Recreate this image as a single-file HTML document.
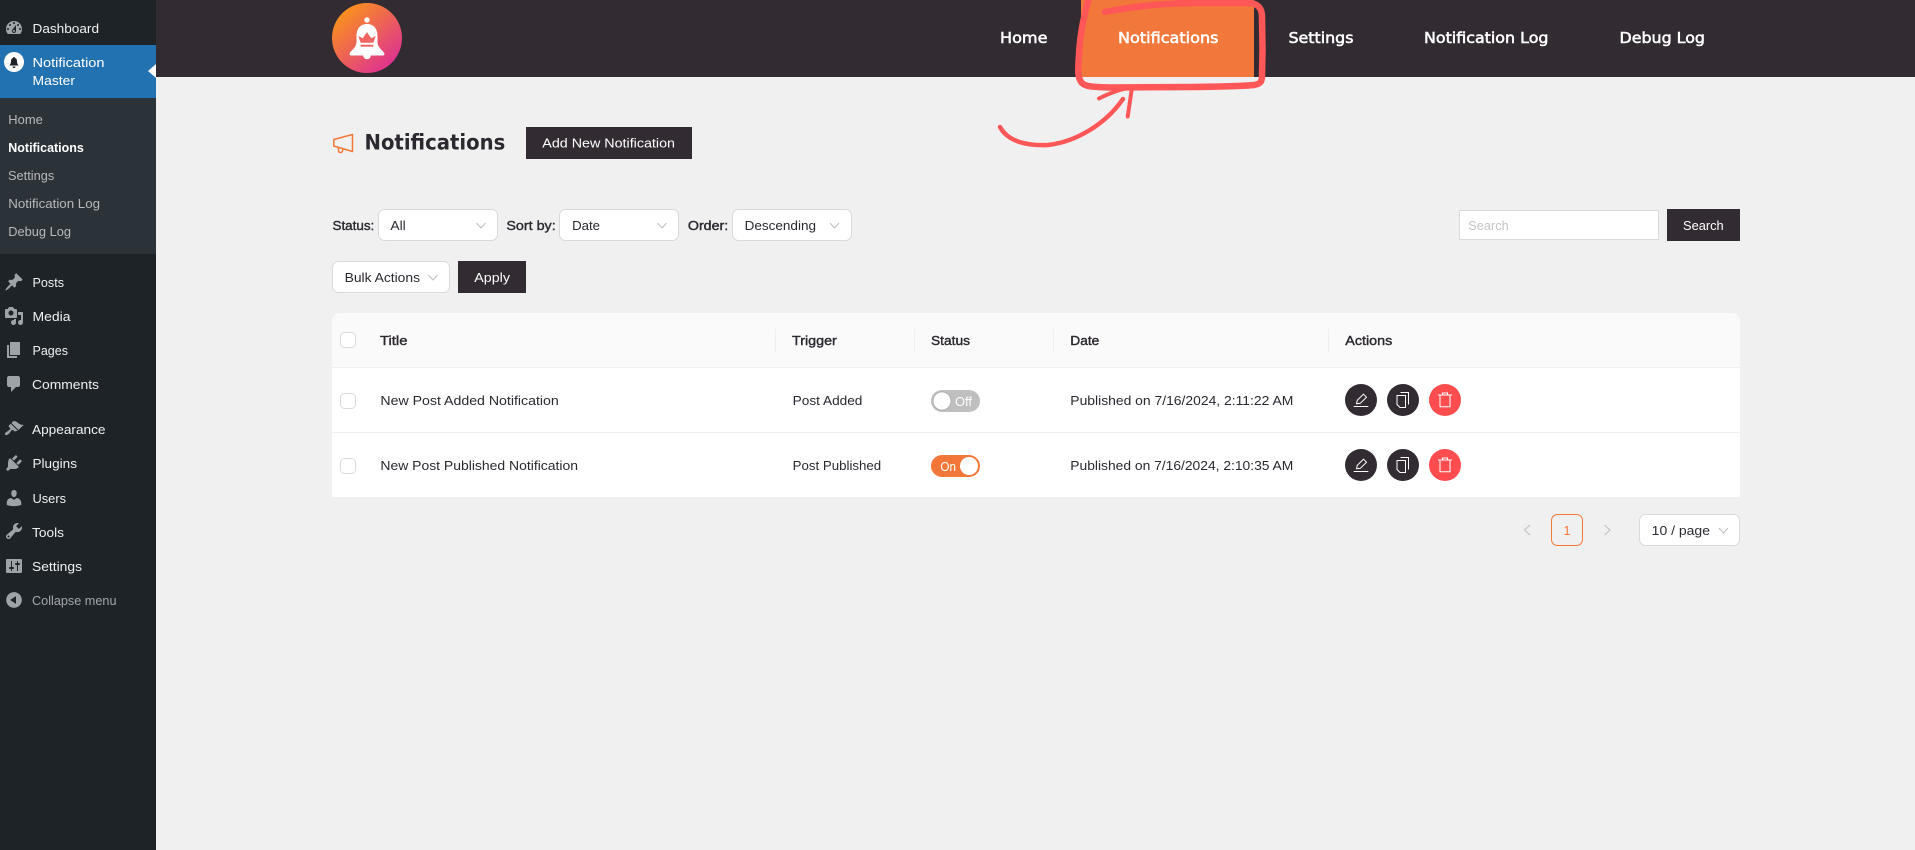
<!DOCTYPE html>
<html lang="en"><head><meta charset="utf-8"><title>Notifications</title>
<style>
html,body{margin:0;padding:0;width:1915px;height:850px;overflow:hidden;background:#f0f0f0}
svg{display:block}
text{font-family:"Liberation Sans",Arial,sans-serif;font-size:13.2px;fill:#2c2830}
.m{fill:#f0f0f1}.s{fill:#b7b9bc}.w{fill:#fff}
.h{stroke:#2c2830;stroke-width:.4px}
.n{font-family:"DejaVu Sans",sans-serif;font-size:15px;fill:#fff;stroke:#fff;stroke-width:.55px}
.i{fill:#9ea3a7}
.sel{fill:#fff;stroke:#d9d9d9}
.ch{fill:none;stroke:#bdbdbd;stroke-width:1}
.ic{fill:none;stroke:#fff;stroke-width:1}
</style></head><body>
<svg width="1915" height="850" viewBox="0 0 1915 850" xmlns="http://www.w3.org/2000/svg">
<defs><linearGradient id="g" x1="0.12" y1="0.12" x2="0.82" y2="0.9"><stop offset="0" stop-color="#fb921c"/><stop offset="1" stop-color="#df338f"/></linearGradient></defs>
<rect width="1915" height="850" fill="#f0f0f0"/>
<!-- sidebar -->
<rect width="156" height="850" fill="#1d2327"/>
<rect y="45" width="156" height="53" fill="#2271b1"/>
<rect y="98" width="156" height="156" fill="#2c3338"/>
<path d="M156 64 L148 71 L156 78Z" fill="#fff"/>
<g class="i">
<path transform="translate(4,18)" fill-rule="evenodd" d="M3.76 16h12.48c1.1-1.37 1.76-3.11 1.76-5 0-4.42-3.58-8-8-8s-8 3.58-8 8c0 1.89.66 3.63 1.76 5zM10 4c.55 0 1 .45 1 1s-.45 1-1 1-1-.45-1-1 .45-1 1-1zM6 6c.55 0 1 .45 1 1s-.45 1-1 1-1-.45-1-1 .45-1 1-1zm8 0c.55 0 1 .45 1 1s-.45 1-1 1-1-.45-1-1 .45-1 1-1zm-5.37 5.55L12 7v6c0 1.1-.9 2-2 2s-2-.9-2-2c0-.57.24-1.08.63-1.45zM4 10c.55 0 1 .45 1 1s-.45 1-1 1-1-.45-1-1 .45-1 1-1zm12 0c.55 0 1 .45 1 1s-.45 1-1 1-1-.45-1-1 .45-1 1-1zm-5 3c0-.55-.45-1-1-1s-1 .45-1 1 .45 1 1 1 1-.45 1-1z"/>
<path transform="translate(4,272)" d="M10.44 3.02l1.82-1.82 6.36 6.35-1.83 1.82c-1.05-.68-2.48-.57-3.41.36l-.75.75c-.92.93-1.04 2.35-.35 3.41l-1.83 1.82-2.41-2.41-2.8 2.79c-.42.42-3.38 2.71-3.8 2.29s1.86-3.39 2.28-3.81l2.79-2.79L4.1 9.36l1.83-1.82c1.05.69 2.48.57 3.4-.36l.75-.75c.93-.92 1.05-2.35.36-3.41z"/>
<path transform="translate(4,306)" fill-rule="evenodd" d="M13 11V4c0-.55-.45-1-1-1h-1.67L9 1H5L3.67 3H2c-.55 0-1 .45-1 1v7c0 .55.45 1 1 1h10c.55 0 1-.45 1-1zM7 4.5c1.38 0 2.5 1.12 2.5 2.5S8.38 9.5 7 9.5 4.5 8.38 4.5 7 5.62 4.5 7 4.5zM14 6h5v10.5c0 1.38-1.12 2.5-2.5 2.5S14 17.88 14 16.5s1.12-2.5 2.5-2.5c.17 0 .34.02.5.05V9h-3V6zm-4 8.05V13h2v3.5c0 1.38-1.12 2.5-2.5 2.5S7 17.88 7 16.5 8.12 14 9.5 14c.17 0 .34.02.5.05z"/>
<path transform="translate(4,340)" d="M6 15V2h10v13H6zm-1 1h8v2H3V5h2v11z"/>
<path transform="translate(4,374)" d="M5 2h9c1.1 0 2 .9 2 2v7c0 1.1-.9 2-2 2h-2l-5 5v-5H5c-1.1 0-2-.9-2-2V4c0-1.1.9-2 2-2z"/>
<path transform="translate(4,419)" d="M14.48 11.06L7.41 3.99l1.5-1.5c.5-.56 2.3-.47 3.51.32 1.21.8 1.43 1.28 2.91 2.1 1.18.64 2.45 1.26 4.45.85zm-.71.71L6.7 4.7 4.93 6.47c-.39.39-.39 1.02 0 1.41l1.06 1.06c.39.39.39 1.03 0 1.42-.6.6-1.43 1.11-2.21 1.69-.35.26-.7.53-1.01.84C1.43 13.23.4 14.96 1.28 15.84c.87.87 2.6-.15 3.94-1.49.31-.31.58-.66.85-1.02.57-.78 1.08-1.61 1.69-2.21.39-.39 1.02-.39 1.41 0l1.06 1.06c.39.39 1.02.39 1.41 0z"/>
<path transform="translate(4,453)" d="M13.11 4.36L9.87 7.6 8 5.73l3.24-3.24c.35-.34 1.05-.2 1.56.32.52.51.66 1.21.31 1.55zm-8 1.77l.91-1.12 9.01 9.01-1.19.84c-.71.71-2.63 1.16-3.82 1.16H6.14L4.9 17.26c-.59.59-1.54.59-2.12 0-.59-.58-.59-1.53 0-2.12l1.24-1.24v-3.88c0-1.13.4-3.19 1.09-3.89zm7.26 3.97l3.24-3.24c.34-.35 1.04-.21 1.55.31.52.51.66 1.21.31 1.55l-3.24 3.25z"/>
<path transform="translate(4,488)" d="M10 9.25c-2.27 0-2.73-3.44-2.73-3.44C7 4.02 7.82 2 9.97 2c2.16 0 2.98 2.02 2.71 3.81 0 0-.41 3.44-2.68 3.44zm0 2.57L12.72 10c2.39 0 4.52 2.33 4.52 4.53v2.49s-3.65 1.13-7.24 1.13c-3.65 0-7.24-1.13-7.24-1.13v-2.49c0-2.25 1.94-4.48 4.47-4.48z"/>
<path transform="translate(4,521)" fill-rule="evenodd" d="M16.68 9.77c-1.34 1.34-3.3 1.67-4.95.99l-5.41 6.52c-.99.99-2.59.99-3.58 0s-.99-2.59 0-3.57l6.52-5.42c-.68-1.65-.35-3.61.99-4.95 1.28-1.28 3.12-1.62 4.72-1.06l-2.89 2.89 2.82 2.82 2.86-2.87c.53 1.58.18 3.39-1.08 4.65zM3.81 16.21c.4.39 1.04.39 1.43 0 .4-.4.4-1.04 0-1.43-.39-.4-1.03-.4-1.43 0-.39.39-.39 1.03 0 1.43z"/>
<path transform="translate(4,556)" fill-rule="evenodd" d="M18 16V4c0-.55-.45-1-1-1H3c-.55 0-1 .45-1 1v12c0 .55.45 1 1 1h14c.55 0 1-.45 1-1zM8 11h1c.55 0 1 .45 1 1s-.45 1-1 1H8v1.5c0 .28-.22.5-.5.5s-.5-.22-.5-.5V13H6c-.55 0-1-.45-1-1s.45-1 1-1h1V5.5c0-.28.22-.5.5-.5s.5.22.5.5V11zm5-2h-1c-.55 0-1-.45-1-1s.45-1 1-1h1V5.5c0-.28.22-.5.5-.5s.5.22.5.5V7h1c.55 0 1 .45 1 1s-.45 1-1 1h-1v5.5c0 .28-.22.5-.5.5s-.5-.22-.5-.5V9z"/>
<path transform="translate(4,590)" fill-rule="evenodd" d="M10 2.16c4.33 0 7.84 3.51 7.84 7.84s-3.51 7.84-7.84 7.84S2.16 14.33 2.16 10 5.71 2.16 10 2.16zm2 11.72V6.12L6.18 9.97z"/>
</g>
<circle cx="14" cy="62" r="10" fill="#fff"/>
<path d="M14 57a1 1 0 0 1 1 1c1.8.6 2 2 2 3.500 0 2 .6 2.800 1.600 4H9.400c1-1.200 1.600-2 1.600-4 0-1.500.2-2.900 2-3.500a1 1 0 0 1 1-1zM12.500 66.500h3a1.500 1.500 0 0 1-3 0z" fill="#1d2327"/>
<text class="m" x="32.500" y="33" textLength="66.500" lengthAdjust="spacingAndGlyphs">Dashboard</text>
<text class="w" x="32.500" y="67" textLength="72" lengthAdjust="spacingAndGlyphs">Notification</text>
<text class="w" x="32.500" y="85" textLength="42.500" lengthAdjust="spacingAndGlyphs">Master</text>
<text class="s" x="8.300" y="124" textLength="34.500" lengthAdjust="spacingAndGlyphs">Home</text>
<text class="w" x="8.300" y="152" textLength="75.500" lengthAdjust="spacingAndGlyphs" font-weight="700">Notifications</text>
<text class="s" x="8" y="180" textLength="46.300" lengthAdjust="spacingAndGlyphs">Settings</text>
<text class="s" x="8.300" y="208" textLength="91.700" lengthAdjust="spacingAndGlyphs">Notification Log</text>
<text class="s" x="8.300" y="236" textLength="62.700" lengthAdjust="spacingAndGlyphs">Debug Log</text>
<text class="m" x="32.500" y="287" textLength="31.500" lengthAdjust="spacingAndGlyphs">Posts</text>
<text class="m" x="32.500" y="321" textLength="38" lengthAdjust="spacingAndGlyphs">Media</text>
<text class="m" x="32.500" y="355" textLength="35.500" lengthAdjust="spacingAndGlyphs">Pages</text>
<text class="m" x="32" y="389" textLength="67" lengthAdjust="spacingAndGlyphs">Comments</text>
<text class="m" x="32" y="434" textLength="73.500" lengthAdjust="spacingAndGlyphs">Appearance</text>
<text class="m" x="32.500" y="468" textLength="44.500" lengthAdjust="spacingAndGlyphs">Plugins</text>
<text class="m" x="32.500" y="503" textLength="33.500" lengthAdjust="spacingAndGlyphs">Users</text>
<text class="m" x="32" y="537" textLength="32" lengthAdjust="spacingAndGlyphs">Tools</text>
<text class="m" x="32" y="571" textLength="50" lengthAdjust="spacingAndGlyphs">Settings</text>
<text x="32" y="605" textLength="84.500" lengthAdjust="spacingAndGlyphs" style="fill:#a3a7ab">Collapse menu</text>
<!-- header -->
<rect x="156" width="1759" height="77" fill="#322b32"/>
<rect x="1081" width="173" height="77" fill="#f2773a"/>
<circle cx="367" cy="38" r="35" fill="url(#g)"/>
<circle cx="367" cy="20" r="2.700" fill="#fff"/>
<path d="M367 24C360 24 356.500 29 356.500 36L356.500 42C356.500 47 352 50 350 52.500Q348.700 55.500 351.500 55.500L382.500 55.500Q385.300 55.500 384 52.500C382 50 377.500 47 377.500 42L377.500 36C377.500 29 374 24 367 24Z" fill="#fff"/>
<circle cx="367" cy="55.500" r="3.800" fill="#fff"/>
<path d="M358.300 36L362.700 38.300 367 32.300 371.300 38.300 375.700 36 373.300 42.700H360.700Z" fill="#ee6460"/>
<rect x="360.700" y="44.700" width="12.600" height="2" fill="#ee6460"/>
<text class="n" x="1000" y="43" textLength="47.500" lengthAdjust="spacingAndGlyphs">Home</text>
<text class="n" x="1118" y="43" textLength="100.500" lengthAdjust="spacingAndGlyphs">Notifications</text>
<text class="n" x="1288.500" y="43" textLength="65" lengthAdjust="spacingAndGlyphs">Settings</text>
<text class="n" x="1424" y="43" textLength="124.500" lengthAdjust="spacingAndGlyphs">Notification Log</text>
<text class="n" x="1619.500" y="43" textLength="85.500" lengthAdjust="spacingAndGlyphs">Debug Log</text>
<!-- title row -->
<path d="M352.500 134.500V151.500L333.800 146V139.500ZM338.500 147.500V150.300A2 2 0 0 0 342.500 150.800L343 149" fill="none" stroke="#f27738" stroke-width="1.500" stroke-linejoin="round"/>
<text x="364.500" y="149.500" textLength="140.800" lengthAdjust="spacingAndGlyphs" style="font-family:'DejaVu Sans',sans-serif;font-size:21.500px;font-weight:700">Notifications</text>
<rect x="526" y="127" width="166" height="32" fill="#322b32"/>
<text class="w" x="542.300" y="147.500" textLength="132.700" lengthAdjust="spacingAndGlyphs">Add New Notification</text>
<!-- filters -->
<text class="h" x="332.500" y="230" textLength="41.800" lengthAdjust="spacingAndGlyphs">Status:</text>
<rect class="sel" x="378.500" y="209.500" width="119" height="31" rx="6"/>
<text x="390.400" y="230" textLength="15.300" lengthAdjust="spacingAndGlyphs">All</text>
<path class="ch" d="M476.500 223L481 228 485.500 223"/>
<text class="h" x="506.400" y="230" textLength="49.300" lengthAdjust="spacingAndGlyphs">Sort by:</text>
<rect class="sel" x="559.500" y="209.500" width="119" height="31" rx="6"/>
<text x="572.100" y="230" textLength="27.900" lengthAdjust="spacingAndGlyphs">Date</text>
<path class="ch" d="M657.500 223L662 228 666.500 223"/>
<text class="h" x="687.900" y="230" textLength="40.300" lengthAdjust="spacingAndGlyphs">Order:</text>
<rect class="sel" x="732.500" y="209.500" width="119" height="31" rx="6"/>
<text x="744.600" y="230" textLength="71.400" lengthAdjust="spacingAndGlyphs">Descending</text>
<path class="ch" d="M830 223L834.500 228 839 223"/>
<rect class="sel" x="332.500" y="261.500" width="117" height="31" rx="6"/>
<text x="344.600" y="282" textLength="75.400" lengthAdjust="spacingAndGlyphs">Bulk Actions</text>
<path class="ch" d="M428.500 275L433 280 437.500 275"/>
<rect x="458" y="261" width="68" height="32" fill="#322b32"/>
<text class="w" x="474.300" y="282" textLength="35.700" lengthAdjust="spacingAndGlyphs">Apply</text>
<rect x="1459.500" y="210.500" width="199" height="29" fill="#fff" stroke="#d9d9d9"/>
<text x="1468.300" y="230" textLength="40.400" lengthAdjust="spacingAndGlyphs" style="fill:#c4c4c4">Search</text>
<rect x="1667" y="209" width="73" height="32" fill="#322b32"/>
<text class="w" x="1683" y="230" textLength="40.700" lengthAdjust="spacingAndGlyphs">Search</text>
<!-- table -->
<path d="M332 367V321a8 8 0 0 1 8-8H1732a8 8 0 0 1 8 8V367Z" fill="#fafafa"/>
<rect x="332" y="367" width="1408" height="130" fill="#fff"/>
<rect x="332" y="367" width="1408" height="1" fill="#f0f0f0"/>
<rect x="332" y="432" width="1408" height="1" fill="#f0f0f0"/>
<g fill="#efefef"><rect x="775" y="329" width="1" height="23"/><rect x="914" y="329" width="1" height="23"/><rect x="1053" y="329" width="1" height="23"/><rect x="1328" y="329" width="1" height="23"/></g>
<g fill="#fff" stroke="#d9d9d9"><rect x="340.500" y="332.500" width="15" height="15" rx="4"/><rect x="340.500" y="393.500" width="15" height="15" rx="4"/><rect x="340.500" y="458.500" width="15" height="15" rx="4"/></g>
<text class="h" x="380" y="345" textLength="27.500" lengthAdjust="spacingAndGlyphs">Title</text>
<text class="h" x="792" y="345" textLength="44.800" lengthAdjust="spacingAndGlyphs">Trigger</text>
<text class="h" x="931" y="345" textLength="39" lengthAdjust="spacingAndGlyphs">Status</text>
<text class="h" x="1070.300" y="345" textLength="29" lengthAdjust="spacingAndGlyphs">Date</text>
<text class="h" x="1345.300" y="345" textLength="47" lengthAdjust="spacingAndGlyphs">Actions</text>
<text x="380.400" y="405" textLength="178.400" lengthAdjust="spacingAndGlyphs">New Post Added Notification</text>
<text x="792.700" y="405" textLength="69.700" lengthAdjust="spacingAndGlyphs">Post Added</text>
<text x="1070.300" y="405" textLength="223" lengthAdjust="spacingAndGlyphs">Published on 7/16/2024, 2:11:22 AM</text>
<text x="380.400" y="470" textLength="197.600" lengthAdjust="spacingAndGlyphs">New Post Published Notification</text>
<text x="792.700" y="470" textLength="88.500" lengthAdjust="spacingAndGlyphs">Post Published</text>
<text x="1070.300" y="470" textLength="223" lengthAdjust="spacingAndGlyphs">Published on 7/16/2024, 2:10:35 AM</text>
<!-- switches -->
<rect x="931" y="390" width="49" height="22" rx="11" fill="#bfbfbf"/>
<circle cx="942" cy="401" r="9" fill="#fff" stroke="#a9a9a9" stroke-width=".8"/>
<text class="w" x="955" y="406" textLength="17" lengthAdjust="spacingAndGlyphs" style="font-size:12.500px">Off</text>
<rect x="931" y="455" width="49" height="22" rx="11" fill="#f27738"/>
<circle cx="969" cy="466" r="9" fill="#fff"/>
<text class="w" x="940.400" y="471" textLength="15.600" lengthAdjust="spacingAndGlyphs" style="font-size:12.500px">On</text>
<!-- action buttons -->
<g transform="translate(0,400)">
<circle cx="1361" r="16" fill="#322b32"/><circle cx="1403" r="16" fill="#322b32"/><circle cx="1445" r="16" fill="#ff4d4f"/>
<path class="ic" d="M1353.700 6.500H1368.300M1356.500 3.800L1357.300 .3 1363.500-5.800 1366.500-2.800 1360.300 3.300Z"/>
<path class="ic" d="M1397-4.500H1405.500V7.500H1400L1397 4.500ZM1400.500-7.500H1408.500V4.500"/>
<path class="ic" d="M1438-5H1452M1442.500-5V-7H1447.500V-5M1440-5V6.700H1450V-5"/>
</g>
<g transform="translate(0,465)">
<circle cx="1361" r="16" fill="#322b32"/><circle cx="1403" r="16" fill="#322b32"/><circle cx="1445" r="16" fill="#ff4d4f"/>
<path class="ic" d="M1353.700 6.500H1368.300M1356.500 3.800L1357.300 .3 1363.500-5.800 1366.500-2.800 1360.300 3.300Z"/>
<path class="ic" d="M1397-4.500H1405.500V7.500H1400L1397 4.500ZM1400.500-7.500H1408.500V4.500"/>
<path class="ic" d="M1438-5H1452M1442.500-5V-7H1447.500V-5M1440-5V6.700H1450V-5"/>
</g>
<!-- pagination -->
<path d="M1530 525L1524.500 530 1530 535M1604.500 525L1610 530 1604.500 535" fill="none" stroke="#bdbdbd" stroke-width="1"/>
<rect x="1551.500" y="514.500" width="31" height="31" rx="6" fill="none" stroke="#f27738"/>
<text x="1563.500" y="535" textLength="7" lengthAdjust="spacingAndGlyphs" style="fill:#f27738">1</text>
<rect class="sel" x="1639.500" y="514.500" width="100" height="31" rx="6"/>
<text x="1651.700" y="535" textLength="58.300" lengthAdjust="spacingAndGlyphs">10 / page</text>
<path class="ch" d="M1719 528L1723.500 533 1728 528"/>
<!-- annotation scribble -->
<g fill="none" stroke="#ff5757" stroke-linecap="round" stroke-linejoin="round">
<path stroke-width="6.500" d="M1089 -2C1084 15 1080 33 1079 55C1078 68 1077 78 1082 83C1086 87 1095 87 1110 87.500L1193 87C1225 86.500 1245 86 1254 85C1260 84 1262 82 1262 76L1262.500 50L1262 17C1262 8 1258 4 1250 3L1193 3C1160 3.500 1130 7 1105 12"/>
<path stroke-width="4.500" d="M1000 127C1008 142 1028 146 1048 145C1075 142 1105 125 1123 99"/>
<path stroke-width="4" d="M1099 98.500C1108 94 1120 89 1131 87.500M1132 87.500L1127.700 116.500"/>
</g>
</svg>
</body></html>
